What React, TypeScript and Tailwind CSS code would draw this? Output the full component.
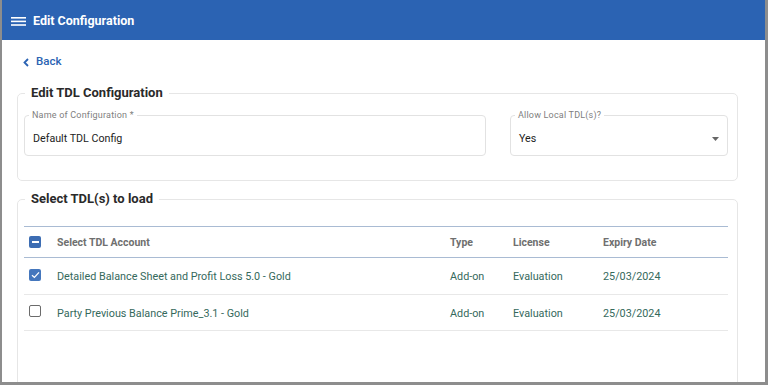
import React from "react"

interface TdlRow {
  name: string
  type: string
  license: string
  expiry: string
  checked: boolean
}

const rows: TdlRow[] = [
  {
    name: "Detailed Balance Sheet and Profit Loss 5.0 - Gold",
    type: "Add-on",
    license: "Evaluation",
    expiry: "25/03/2024",
    checked: true,
  },
  {
    name: "Party Previous Balance Prime_3.1 - Gold",
    type: "Add-on",
    license: "Evaluation",
    expiry: "25/03/2024",
    checked: false,
  },
]

const Checkbox = ({ state }: { state: "checked" | "unchecked" | "indeterminate" }) => {
  if (state === "indeterminate") {
    return (
      <div className="w-3 h-3 rounded-[2px] bg-[#3d6db3] flex items-center justify-center">
        <div className="w-[7px] h-[1.5px] bg-white" />
      </div>
    )
  }
  if (state === "checked") {
    return (
      <div className="w-3 h-3 rounded-[2px] bg-[#4577bd] flex items-center justify-center">
        <svg width="9" height="8" viewBox="0 0 9 8">
          <path d="M1 4.2 L3.4 6.4 L8 1.4" fill="none" stroke="white" strokeWidth="1.3" />
        </svg>
      </div>
    )
  }
  return <div className="w-3 h-3 rounded-[2px] border-[1.5px] border-[#6b6b6b]" />
}

const OutlinedField = ({
  label,
  value,
  width,
  select,
}: {
  label: string
  value: string
  width: string
  select?: boolean
}) => (
  <fieldset className={`${width} h-[46px] border border-[#e2e2e2] rounded-[4px] px-2`}>
    <legend className="ml-[-4px] px-[3px] text-[9px] leading-[11px] tracking-[0.2px] text-[#808080]">{label}</legend>
    <div className="pt-[10px] flex items-center justify-between h-[26px]">
      <span className="text-[10.7px] leading-4 text-[#222]">{value}</span>
      {select && (
        <svg width="7" height="4" viewBox="0 0 7 4">
          <path d="M0 0 L7 0 L3.5 4 Z" fill="#666" />
        </svg>
      )}
    </div>
  </fieldset>
)

export default function App() {
  return (
    <div className="w-[768px] h-[385px] border-l-2 border-r-[3px] border-b-[3px] border-[#8d8d8d] overflow-hidden bg-white font-['Roboto',sans-serif]">
      {/* Top bar */}
      <div className="h-[40px] bg-[#2b63b3] flex items-center pl-[9px] pt-[2px]">
        <svg width="15" height="9" viewBox="0 0 15 9">
          <rect x="0" y="0" width="15" height="1.6" fill="white" />
          <rect x="0" y="3.6" width="15" height="1.6" fill="white" />
          <rect x="0" y="7.2" width="15" height="1.6" fill="white" />
        </svg>
        <span className="ml-[7px] text-[12.5px] font-bold text-white">Edit Configuration</span>
      </div>

      {/* Main */}
      <div className="pl-[15px] pr-[27px] pt-[14px]">
        <div className="flex items-center h-4 pl-[6px] text-[11.5px] font-medium text-[#2b63b3]">
          <svg width="6" height="9" viewBox="0 0 6 9">
            <path d="M5 1 L1.5 4.5 L5 8" fill="none" stroke="#2b63b3" strokeWidth="1.8" />
          </svg>
          <span className="ml-[7px]">Back</span>
        </div>

        <fieldset className="mt-[14px] border border-[#e6e6e6] rounded-[5px] pl-[6px] pr-[9px] pb-[24px]">
          <legend className="ml-px px-[6px] text-[13px] leading-[18px] font-bold text-[#2a2a2a]">
            Edit TDL Configuration
          </legend>
          <div className="mt-2 flex gap-[24px]">
            <OutlinedField label="Name of Configuration *" value="Default TDL Config" width="w-[462px]" />
            <OutlinedField label="Allow Local TDL(s)?" value="Yes" width="w-[218px]" select />
          </div>
        </fieldset>

        <fieldset className="mt-[9px] h-[230px] border border-[#e6e6e6] rounded-[5px] pl-[6px] pr-[9px]">
          <legend className="ml-px px-[6px] text-[13px] leading-[18px] font-bold text-[#2a2a2a]">
            Select TDL(s) to load
          </legend>
          <div className="mt-[18px] border-t border-[#a9bbd3]">
            <div className="h-[31px] flex items-center border-b border-[#a9bbd3] text-[10.5px] font-bold text-[#6f6f6f]">
              <div className="w-[33px] pl-[5px]">
                <Checkbox state="indeterminate" />
              </div>
              <div className="w-[393px] pt-[2px]">Select TDL Account</div>
              <div className="w-[63px] pt-[2px]">Type</div>
              <div className="w-[90px] pt-[2px]">License</div>
              <div className="flex-1 pt-[2px]">Expiry Date</div>
            </div>
            {rows.map((row) => (
              <div
                key={row.name}
                className="h-[36.5px] flex items-center border-b border-[#e8e8e8] text-[10.8px] text-[#35695c]"
              >
                <div className="w-[33px] pl-[5px] pb-[2px]">
                  <Checkbox state={row.checked ? "checked" : "unchecked"} />
                </div>
                <div className="w-[393px] pt-[3px]">{row.name}</div>
                <div className="w-[63px] pt-[3px]">{row.type}</div>
                <div className="w-[90px] pt-[3px]">{row.license}</div>
                <div className="flex-1 pt-[3px]">{row.expiry}</div>
              </div>
            ))}
          </div>
        </fieldset>
      </div>
    </div>
  )
}
